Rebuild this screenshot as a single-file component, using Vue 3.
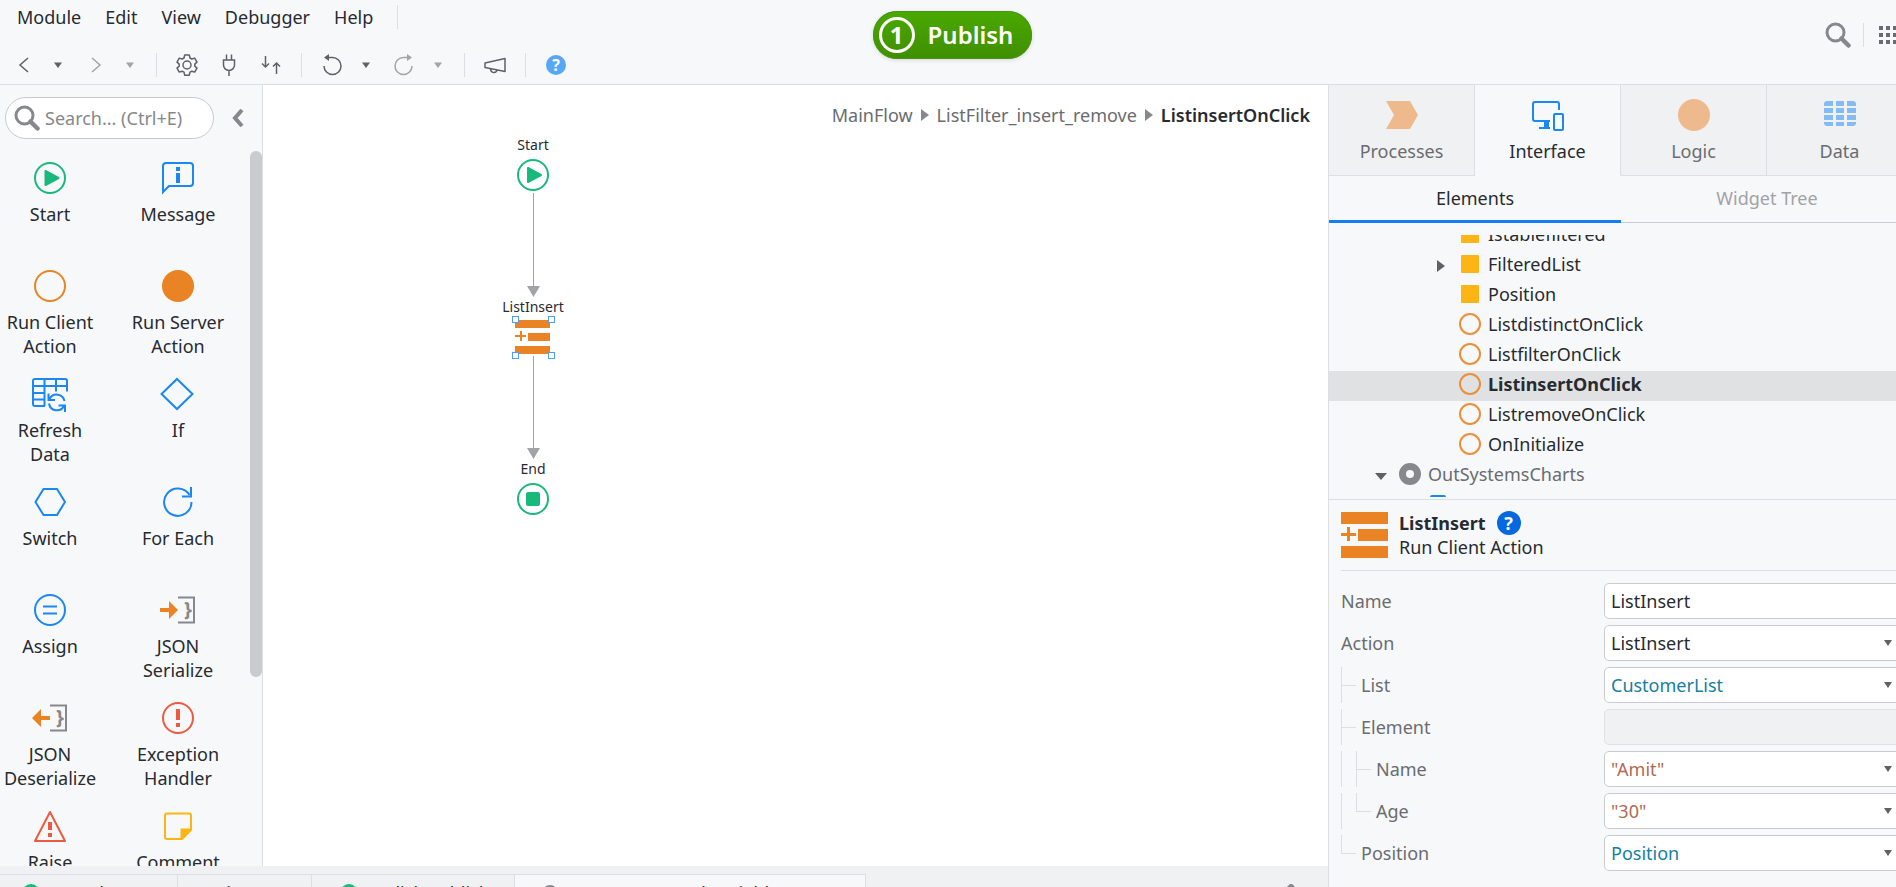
<template>
  <div class="studio">
    <header class="topbar">
      <div class="topbar-left">
        <nav class="menu">
          <button v-for="item in menu" :key="item" type="button">{{ item }}</button>
          <span class="divider"></span>
        </nav>
        <div class="toolbar">
          <template v-for="(tool, i) in tools" :key="i">
            <span v-if="tool.icon === 'divider'" class="divider"></span>
            <button
              v-else
              type="button"
              :class="{ caret: tool.icon === 'caret' }"
              :disabled="tool.disabled"
              :aria-label="tool.label"
            >
              <svg v-if="tool.icon !== 'help'" width="24" height="24" viewBox="0 0 24 24" v-html="toolIcons[tool.icon]"></svg>
              <span v-else class="help-dot">?</span>
            </button>
          </template>
        </div>
      </div>
      <button type="button" class="publish"><span class="publish-count">1</span>Publish</button>
      <div class="topbar-right">
        <button type="button" aria-label="Search">
          <svg width="26" height="26" viewBox="0 0 26 26" v-html="searchIcon"></svg>
        </button>
        <span class="divider"></span>
        <button type="button" aria-label="Apps">
          <svg width="17" height="18" viewBox="0 0 17 18" fill="#6a6c6f">
            <path d="M0 0h4v4H0zM7 0h4v4H7zM14 0h4v4h-4zM0 7h4v4H0zM7 7h4v4H7zM14 7h4v4h-4zM0 14h4v4H0zM7 14h4v4H7zM14 14h4v4h-4z" />
          </svg>
        </button>
      </div>
    </header>

    <div class="body">
      <div class="main">
        <div class="work">
          <aside class="toolbox">
            <div class="toolbox-search">
              <label class="search">
                <svg width="26" height="26" viewBox="0 0 26 26" v-html="searchIcon"></svg>
                <input type="text" placeholder="Search... (Ctrl+E)" aria-label="Search" />
              </label>
              <button type="button" class="collapse" aria-label="Collapse">
                <svg width="12" height="18" viewBox="0 0 12 18">
                  <path d="M10 1 3 9l7 8" fill="none" stroke="#86888b" stroke-width="4" />
                </svg>
              </button>
            </div>
            <div class="palette">
              <div class="palette-grid">
                <div v-for="p in palette" :key="p.label" class="palette-item">
                  <svg width="36" height="32" viewBox="0 0 36 32" fill="none" stroke-width="2" v-html="p.icon"></svg>
                  <span>{{ p.label }}</span>
                </div>
              </div>
              <div class="scroll-thumb"></div>
            </div>
          </aside>

          <main class="canvas">
            <nav class="breadcrumb">
              <a href="#">MainFlow</a>
              <svg width="8" height="12" viewBox="0 0 8 12"><path d="M0 0l8 6-8 6z" fill="#86888b" /></svg>
              <a href="#">ListFilter_insert_remove</a>
              <svg width="8" height="12" viewBox="0 0 8 12"><path d="M0 0l8 6-8 6z" fill="#86888b" /></svg>
              <strong>ListinsertOnClick</strong>
            </nav>
            <svg class="flow" width="120" height="390" viewBox="0 0 120 390">
              <!-- connectors -->
              <g fill="#a1a3a6">
                <path d="M60 58h1v96h-1zM54 151h13l-6.500 11z" />
                <path d="M60 221h1v95h-1zM54 313h13l-6.500 11z" />
              </g>
              <text x="60" y="15">Start</text>
              <circle cx="60" cy="40" r="15" fill="#fff" stroke="#19b87b" stroke-width="2" />
              <path d="M55 33v14l13-7z" fill="#19b87b" stroke="#19b87b" stroke-width="2" stroke-linejoin="round" />

              <text x="60" y="177">ListInsert</text>
              <path d="M42 185h35v8H42zM55 198h22v8H55zM42 211h35v8H42zM47 196h2v4h4v2h-4v4h-2v-4h-5v-2h5z" fill="#e98323" />
              <g fill="#fff" stroke="#4f9ff8">
                <rect x="39.500" y="181.500" width="6" height="6" />
                <rect x="75.500" y="181.500" width="6" height="6" />
                <rect x="39.500" y="217.500" width="6" height="6" />
                <rect x="75.500" y="217.500" width="6" height="6" />
              </g>

              <text x="60" y="339">End</text>
              <circle cx="60" cy="364" r="15" fill="#fff" stroke="#19b87b" stroke-width="2" />
              <rect x="53" y="357" width="14" height="14" rx="2" fill="#19b87b" />
            </svg>
          </main>
        </div>

        <footer class="bottom">
          <button v-for="t in bottomTabs" :key="t.label" type="button" :class="['bottom-tab', t.name]">
            <span v-if="t.dot" :class="['dot', t.dot]"></span>{{ t.label }}
          </button>
          <svg class="expand" width="14" height="8" viewBox="0 0 14 8"><path d="M1 7l6-6 6 6" fill="none" stroke="#86888b" stroke-width="3" /></svg>
        </footer>
      </div>

      <aside class="side">
        <div class="side-inner">
          <div class="layers">
            <button v-for="l in layers" :key="l.label" type="button" :class="{ active: l.active }">
              <svg width="32" height="32" viewBox="0 0 32 32" v-html="l.icon"></svg>
              {{ l.label }}
            </button>
          </div>
          <div class="subtabs">
            <button type="button" class="active">Elements</button>
            <button type="button">Widget Tree</button>
          </div>

          <div class="tree">
            <ul>
              <li v-for="n in nodes" :key="n.label" :class="[n.level, { selected: n.selected }]">
                <span class="toggle">
                  <svg v-if="n.toggle === 'closed'" width="8" height="12" viewBox="0 0 8 12"><path d="M0 0l8 6-8 6z" fill="#5f6164" /></svg>
                  <svg v-if="n.toggle === 'open'" width="12" height="7" viewBox="0 0 12 7"><path d="M0 0h12l-6 7z" fill="#5f6164" /></svg>
                </span>
                <span class="node-icon"><i :class="n.icon"></i></span>
                <span>{{ n.label }}</span>
              </li>
            </ul>
          </div>

          <section class="props">
            <div class="props-head">
              <svg width="47" height="46" viewBox="0 0 47 46" fill="#e98323">
                <path d="M0 0h47v12H0zM17 17h30v12H17zM0 34h47v12H0zM6 15h3v6h6v3H9v5H6v-5H0v-3h6z" />
              </svg>
              <div class="props-title">
                <h2>ListInsert <button type="button" class="help-dot large" aria-label="Help">?</button></h2>
                <p>Run Client Action</p>
              </div>
            </div>
            <div v-for="f in fields" :key="f.id" :class="['field', f.branch]">
              <label :for="f.id">{{ f.label }}</label>
              <input v-if="f.type === 'text'" :id="f.id" type="text" :value="f.value" :disabled="!f.value" />
              <div v-else class="select">
                <select :id="f.id" :class="f.tone">
                  <option>{{ f.value }}</option>
                </select>
                <svg width="8" height="6" viewBox="0 0 8 6"><path d="M0 0h8L4 6z" fill="#5f6164" /></svg>
              </div>
            </div>
          </section>
        </div>
      </aside>
    </div>
  </div>
</template>

<script setup>
const menu = ['Module', 'Edit', 'View', 'Debugger', 'Help']

const tools = [
  { icon: 'back', label: 'Back' },
  { icon: 'caret', label: 'Back history' },
  { icon: 'forward', label: 'Forward', disabled: true },
  { icon: 'caret', label: 'Forward history', disabled: true },
  { icon: 'divider' },
  { icon: 'gear', label: 'Settings' },
  { icon: 'plug', label: 'Manage dependencies' },
  { icon: 'merge', label: 'Compare and merge' },
  { icon: 'divider' },
  { icon: 'undo', label: 'Undo' },
  { icon: 'caret', label: 'Undo history' },
  { icon: 'redo', label: 'Redo', disabled: true },
  { icon: 'caret', label: 'Redo history', disabled: true },
  { icon: 'divider' },
  { icon: 'megaphone', label: 'Feedback' },
  { icon: 'divider' },
  { icon: 'help', label: 'Help' }
]

const toolIcons = {
  back: '<path d="M16 5 8 12l8 7" />',
  forward: '<path d="m8 5 8 7-8 7" />',
  caret: '<path class="solid" d="M8 9.500h8L12 15z" />',
  gear:
    '<path d="M9.700 2h4.600l.7 3 1.800 1 2.900-.9 2.300 4-2.200 2v2l2.200 2-2.300 4-2.900-.9-1.800 1-.7 3H9.700L9 19.200l-1.800-1-2.900.9-2.300-4 2.200-2v-2L2 9.100l2.300-4 2.900.9L9 5z" stroke-linejoin="round" /><circle cx="12" cy="12" r="4" />',
  plug: '<path d="M9.500 1.500V7m5-5.500V7M6.500 7h11v5a5.500 5.500 0 0 1-11 0zM12 17.500V23" />',
  merge: '<path d="M6.500 3v11M3 10.500 6.500 14l3.500-3.500M17.500 21V10M14 13.500l3.500-3.500 3.500 3.500" />',
  undo: '<path d="M8 4.500h4.500A8.500 8.500 0 1 1 4 13" /><path class="solid" d="M4 4.500 9 1v7z" />',
  redo: '<path d="M16 4.500h-4.500A8.500 8.500 0 1 0 20 13" /><path class="solid" d="M20 4.500 15 1v7z" />',
  megaphone: '<path d="m2 10 20-4.500v13L2 14.500zM7.500 15.500c0 5 6 5 6.500 1.500" stroke-linejoin="round" />'
}

const searchIcon =
  '<circle cx="10.500" cy="10.500" r="8.500" fill="none" stroke="#86888b" stroke-width="3" /><path d="m16.500 16.500 7 7" fill="none" stroke="#86888b" stroke-width="4.500" stroke-linecap="round" />'

const bracket =
  '<path d="M18 3.500h16v25H18" stroke="#86888b" /><text x="28" y="22" text-anchor="middle" font-size="20" font-weight="700" fill="#86888b">}</text>'

const palette = [
  {
    label: 'Start',
    icon: '<g stroke="#19b87b"><circle cx="18" cy="16" r="15" /><path d="M13.500 9v14l13-7z" fill="#19b87b" stroke-linejoin="round" /></g>'
  },
  {
    label: 'Message',
    icon: '<path d="M3 30V4a3 3 0 0 1 3-3h24a3 3 0 0 1 3 3v17a3 3 0 0 1-3 3H9z" stroke="#1a87f2" /><path d="M16 5h4v4h-4zM16 11h4v10h-4z" fill="#1a87f2" />'
  },
  { label: 'Run Client Action', icon: '<circle cx="18" cy="16" r="15" stroke="#e98323" />' },
  { label: 'Run Server Action', icon: '<circle cx="18" cy="16" r="16" fill="#e98323" />' },
  {
    label: 'Refresh Data',
    icon: '<path d="M13 28H3a2 2 0 0 1-2-2V3a2 2 0 0 1 2-2h30a2 2 0 0 1 2 2v10.500M1 8h34M1 15h12M1 21.500h12M12.500 1v27M24 1v12.500M16.500 15.500V22H23M33 34v-6.500h-6.500M17.500 21a8 8 0 0 1 15 2M32 28a8 8 0 0 1-15-2.500" stroke="#1a87f2" />'
  },
  { label: 'If', icon: '<path d="M17 1 32.500 16 17 31 1.500 16z" stroke="#1a87f2" />' },
  { label: 'Switch', icon: '<path d="M11.500 3h13.500l8 13-8 13H11.500l-8-13z" stroke="#1a87f2" />' },
  {
    label: 'For Each',
    icon: '<path d="M31.500 16A13.700 13.700 0 1 1 29.500 9M31 1v9.500h-9" stroke="#1a87f2" />'
  },
  {
    label: 'Assign',
    icon: '<g stroke="#1a87f2"><circle cx="18" cy="16" r="15" /><path d="M11 12.500h14M11 19.500h14" /></g>'
  },
  { label: 'JSON Serialize', icon: '<path d="M0 14h9V7l9 9-9 9v-7H0z" fill="#e98323" />' + bracket },
  { label: 'JSON Deserialize', icon: '<path d="M18 14H9V7l-9 9 9 9v-7h9z" fill="#e98323" />' + bracket },
  {
    label: 'Exception Handler',
    icon: '<circle cx="18" cy="16" r="15" stroke="#ec5a41" /><path d="M16 7h4v11h-4zM16 21h4v4h-4z" fill="#ec5a41" />'
  },
  {
    label: 'Raise',
    icon: '<path d="M18 2 33 31H3z" stroke="#ec5a41" stroke-linejoin="round" /><path d="M16 12h4v8h-4zM16 23h4v4h-4z" fill="#ec5a41" />'
  },
  {
    label: 'Comment',
    icon: '<path d="M7 3.500h22a2 2 0 0 1 2 2V20l-9 9H7a2 2 0 0 1-2-2V5.500a2 2 0 0 1 2-2z" stroke="#fdb515" /><path d="M20.500 30V18.500H32z" fill="#fdb515" />'
  }
]

const layers = [
  { label: 'Processes', icon: '<path d="M0 2h24l8 14-8 14H0l8-14z" fill="#eeba8d" />' },
  {
    label: 'Interface',
    active: true,
    icon: '<g fill="none" stroke="#1a87f2" stroke-width="2"><path d="M27 11V5a2 2 0 0 0-2-2H3a2 2 0 0 0-2 2v15a2 2 0 0 0 2 2h15M7 29h11" /><rect x="22" y="15" width="9" height="16" rx="1" /></g><path d="M12 22h5v7h-5z" fill="#1a87f2" />'
  },
  { label: 'Logic', icon: '<circle cx="16" cy="16" r="16" fill="#eeba8d" />' },
  {
    label: 'Data',
    icon: '<path d="M2 2h7v5H0V4zM12 2h8v5h-8zM23 2h7l2 2v3h-9zM0 9h9v5H0zM12 9h8v5h-8zM23 9h9v5h-9zM0 16h9v5H0zM12 16h8v5h-8zM23 16h9v5h-9zM0 23h9v4H2l-2-2zM12 23h8v4h-8zM23 23h9v2l-2 2h-7z" fill="#85bbf4" />'
  }
]

const nodes = [
  { label: 'Istablefiltered', icon: 'square' },
  { label: 'FilteredList', icon: 'square', toggle: 'closed' },
  { label: 'Position', icon: 'square' },
  { label: 'ListdistinctOnClick', icon: 'circle' },
  { label: 'ListfilterOnClick', icon: 'circle' },
  { label: 'ListinsertOnClick', icon: 'circle', selected: true },
  { label: 'ListremoveOnClick', icon: 'circle' },
  { label: 'OnInitialize', icon: 'circle' },
  { label: 'OutSystemsCharts', icon: 'donut', toggle: 'open', level: 'flow-level' },
  { label: '', icon: 'block', level: 'block-level' }
]

const fields = [
  { id: 'name', label: 'Name', type: 'text', value: 'ListInsert' },
  { id: 'action', label: 'Action', value: 'ListInsert' },
  { id: 'list', label: 'List', value: 'CustomerList', tone: 'variable', branch: 'child' },
  { id: 'element', label: 'Element', type: 'text', value: '', branch: 'child' },
  { id: 'element-name', label: 'Name', value: '"Amit"', tone: 'literal', branch: 'grandchild' },
  { id: 'element-age', label: 'Age', value: '"30"', tone: 'literal', branch: 'grandchild last' },
  { id: 'position', label: 'Position', value: 'Position', tone: 'variable', branch: 'child last' }
]

const bottomTabs = [
  { label: 'TrueChange', name: 'changes', dot: 'ok' },
  { label: 'Debugger', name: 'debugger' },
  { label: '1-Click Publish', name: 'one-click', dot: 'ok' },
  { label: 'Remove Unused Variable', name: 'results', dot: 'search-dot' }
]
</script>

<style>
body {
  margin: 0;
  background: #f7f8fa;
}
</style>

<style scoped>
.studio {
  display: flex;
  flex-direction: column;
  height: 100vh;
  overflow: hidden;
  background: #f7f8fa;
  color: #272b30;
  font-family: "Noto Sans", "Open Sans", sans-serif;
  font-size: 18px;
  line-height: 24px;
}

.studio * {
  box-sizing: border-box;
}

button {
  padding: 0;
  border: 0;
  background: none;
  color: inherit;
  font: inherit;
  cursor: pointer;
}

svg {
  display: block;
  flex: none;
}

.divider {
  width: 1px;
  height: 24px;
  background: #dcdee1;
}

/* Top bar */
.topbar {
  display: grid;
  grid-template-columns: 1fr auto 1fr;
  flex: none;
  height: 85px;
  border-bottom: 1px solid #dcdee1;
}

.menu {
  display: flex;
  align-items: center;
  gap: 24px;
  height: 34px;
  padding-left: 17px;
  padding-bottom: 1px;
}

.toolbar {
  display: flex;
  align-items: center;
  height: 38px;
  margin-top: 12px;
  padding-left: 3px;
}

.toolbar button {
  display: flex;
  justify-content: center;
  width: 42px;
}

.toolbar .caret {
  width: 26px;
  margin-right: 4px;
}

.toolbar button:disabled {
  opacity: 0.55;
}

.toolbar svg {
  fill: none;
  stroke: #5f6164;
  stroke-width: 1.5;
}

.toolbar svg :deep(.solid) {
  fill: #5f6164;
  stroke: none;
}

.toolbar .divider {
  margin: 0 9px;
}

.help-dot {
  display: flex;
  align-items: center;
  justify-content: center;
  width: 20px;
  height: 20px;
  border-radius: 50%;
  background: #58a6f6;
  color: #fff;
  font-size: 16px;
  font-weight: 700;
}

.help-dot.large {
  width: 24px;
  height: 24px;
  background: #0668e1;
  font-size: 18px;
}

.publish {
  display: flex;
  align-items: center;
  gap: 13px;
  height: 48px;
  margin: 11px 0 0 9px;
  padding: 0 19px 0 6px;
  border-radius: 24px;
  background: linear-gradient(#4aa900, #3f8f00);
  box-shadow: inset 0 0 0 1px #4b9413, 0 1px 4px rgba(0, 0, 0, 0.15);
  color: #fff;
  font-size: 24px;
  font-weight: 600;
}

.publish-count {
  display: flex;
  align-items: center;
  justify-content: center;
  width: 36px;
  height: 36px;
  border: 3px solid #fff;
  border-radius: 50%;
  font-weight: 700;
}

.topbar-right {
  display: flex;
  align-items: center;
  justify-content: flex-end;
  gap: 12px;
  height: 70px;
}

.topbar-right .divider {
  margin-right: 3px;
}

/* Work area */
.body {
  display: flex;
  flex: 1;
  min-height: 0;
}

.main {
  display: flex;
  flex: 1;
  flex-direction: column;
  min-width: 0;
}

.work {
  display: flex;
  flex: 1;
  min-height: 0;
}

.toolbox {
  display: flex;
  flex: none;
  flex-direction: column;
  width: 263px;
  border-right: 1px solid #dcdee1;
}

.toolbox-search {
  display: flex;
  align-items: center;
  gap: 18px;
  padding: 12px 0 12px 5px;
}

.search {
  display: flex;
  align-items: center;
  gap: 5px;
  width: 209px;
  height: 42px;
  padding-left: 8px;
  border: 1px solid #c8cacd;
  border-radius: 21px;
  background: #fff;
}

.search input {
  width: 150px;
  padding: 0;
  border: 0;
  outline: 0;
  background: none;
  font: inherit;
}

.search input::placeholder {
  color: #86888b;
  opacity: 1;
}

.palette {
  display: flex;
  flex: 1;
  justify-content: space-between;
  min-height: 0;
  overflow: hidden;
}

.palette-grid {
  display: grid;
  grid-template-columns: 100px 156px;
  grid-auto-rows: 108px;
  width: 250px;
  padding-top: 11px;
}

.palette-item {
  display: flex;
  flex-direction: column;
  align-items: center;
  gap: 8px;
  text-align: center;
}

.palette-item svg {
  overflow: visible;
}

.palette-item span {
  width: 96px;
}

.scroll-thumb {
  width: 12px;
  height: 526px;
  border-radius: 6px;
  background: #cacbcf;
}

.canvas {
  flex: 1;
  position: relative;
  min-width: 0;
  background: #fff;
}

.breadcrumb {
  display: flex;
  align-items: center;
  justify-content: flex-end;
  gap: 8px;
  padding: 18px 18px 0 0;
}

.breadcrumb a {
  color: #6a6c6f;
  text-decoration: none;
}

.breadcrumb strong {
  font-weight: 600;
}

.flow {
  position: absolute;
  top: 50px;
  left: 210px;
}

.flow text {
  fill: #272b30;
  font-size: 14px;
  text-anchor: middle;
}

/* Bottom tabs, cut off by the window edge */
.bottom {
  display: flex;
  align-items: flex-start;
  flex: none;
  height: 21px;
  padding-top: 8px;
  overflow: hidden;
  background: #f0f1f3;
}

.bottom-tab {
  display: flex;
  align-items: center;
  flex: none;
  gap: 10px;
  height: 36px;
  border: solid #dcdee1;
  border-width: 1px 1px 0 0;
}

.changes {
  width: 178px;
  padding-left: 22px;
}

.debugger {
  width: 134px;
  padding-left: 25px;
}

.one-click {
  width: 203px;
  padding-left: 28px;
}

.results {
  width: 351px;
  padding-left: 27px;
  background: #f7f8fa;
}

.dot {
  width: 18px;
  height: 18px;
  border-radius: 50%;
}

.dot.ok {
  background: #19b87b;
}

.dot.search-dot {
  width: 16px;
  height: 16px;
  border: 2px solid #86888b;
}

.expand {
  margin: 10px 30px 0 auto;
}

/* Side panel */
.side {
  flex: none;
  width: 568px;
  overflow: hidden;
  border-left: 1px solid #dcdee1;
}

.side-inner {
  width: 584px;
}

.layers {
  display: grid;
  grid-template-columns: repeat(4, 1fr);
}

.layers button {
  display: flex;
  flex-direction: column;
  align-items: center;
  gap: 8px;
  height: 91px;
  padding-top: 14px;
  border: solid #dcdee1;
  border-width: 0 1px 1px 0;
  background: #f0f1f3;
  color: #6a6c6f;
}

.layers .active {
  border-bottom-color: transparent;
  background: transparent;
  color: #272b30;
}

.subtabs {
  display: grid;
  grid-template-columns: 1fr 1fr;
  height: 47px;
  box-shadow: inset 0 -1px #cacbcf;
}

.subtabs button {
  padding-bottom: 3px;
  color: #a1a3a6;
}

.subtabs .active {
  padding-bottom: 0;
  border-bottom: 3px solid #147cf5;
  color: #272b30;
}

.tree {
  height: 277px;
  padding-top: 12px;
  border-bottom: 1px solid #dcdee1;
}

.tree ul {
  display: flex;
  flex-direction: column;
  justify-content: flex-end;
  height: 262px;
  margin: 0;
  padding: 0;
  overflow: hidden;
  list-style: none;
}

.tree li {
  display: flex;
  align-items: center;
  flex: none;
  height: 30px;
  padding: 0 0 4px 103px;
}

.tree .selected {
  background: #e0e1e3;
  font-weight: 700;
}

.tree .flow-level {
  padding-left: 43px;
  color: #6a6c6f;
}

.tree .block-level {
  align-items: flex-start;
  height: 6px;
  padding: 4px 0 0 71px;
}

.toggle {
  display: flex;
  justify-content: center;
  width: 18px;
  margin-right: 6px;
  padding-top: 4px;
}

.node-icon {
  display: flex;
  justify-content: center;
  width: 28px;
  margin-right: 4px;
}

.square {
  width: 18px;
  height: 18px;
  border-radius: 1px;
  background: #fdb515;
}

.circle {
  width: 22px;
  height: 22px;
  border: 2px solid #eb8f39;
  border-radius: 50%;
}

.donut {
  width: 22px;
  height: 22px;
  border: 7px solid #86888b;
  border-radius: 50%;
}

.block {
  width: 16px;
  height: 16px;
  border: 2px solid #1a87f2;
  border-radius: 2px;
}

.props {
  display: flex;
  flex-direction: column;
  gap: 6px;
  padding: 0 12px;
}

.props-head {
  display: flex;
  gap: 11px;
  height: 71px;
  margin-bottom: 6px;
  padding-top: 12px;
  border-bottom: 1px solid #dcdee1;
}

.props-title {
  margin-top: -1px;
}

.props-title h2 {
  display: flex;
  gap: 11px;
  margin: 0;
  font-size: 18px;
  font-weight: 700;
}

.props-title p {
  margin: 0;
}

.field {
  --rail: #dcdee1;
  display: grid;
  grid-template-columns: 263px 1fr;
  position: relative;
  height: 36px;
}

.field label {
  align-self: center;
  color: #6a6c6f;
}

.child label {
  padding-left: 20px;
}

.grandchild label {
  padding-left: 35px;
}

/* Rails that join the nested arguments */
.child::before,
.grandchild::before,
.grandchild::after {
  content: "";
  position: absolute;
  top: 0;
  left: 0;
  width: 1px;
  height: 36px;
  background: var(--rail);
}

.child::after {
  content: "";
  position: absolute;
  top: 18px;
  left: 1px;
  width: 14px;
  height: 1px;
  background: var(--rail);
}

.child.last::before {
  height: 19px;
}

.grandchild::after {
  left: 15px;
  width: 15px;
  background:
    linear-gradient(var(--rail), var(--rail)) 0 0 / 1px 100% no-repeat,
    linear-gradient(var(--rail), var(--rail)) 0 18px / 15px 1px no-repeat;
}

.grandchild.last::after {
  height: 19px;
}

.select {
  position: relative;
}

.field input,
.field select {
  width: 100%;
  height: 36px;
  padding: 0 24px 0 6px;
  border: 1px solid #cacbcf;
  border-radius: 5px;
  outline: 0;
  appearance: none;
  background: #fff;
  color: #272b30;
  font: inherit;
}

.field input:disabled {
  border-color: #e0e1e3;
  background: #f0f1f3;
}

.field .variable {
  color: #15809f;
}

.field .literal {
  color: #b06a52;
}

.select svg {
  position: absolute;
  top: 15px;
  right: 9px;
}
</style>
